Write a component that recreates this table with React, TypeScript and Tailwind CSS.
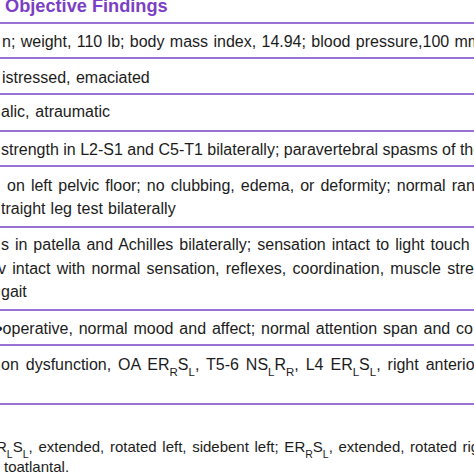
import React from "react";

const Line = () => <div className="h-[2px] w-full bg-[#9772d2] shrink-0" />;

const Sub = ({ children }: { children: React.ReactNode }) => (
  <sub className="text-[11.5px] align-[-3px] leading-none">{children}</sub>
);

const SubF = ({ children }: { children: React.ReactNode }) => (
  <sub className="text-[10.5px] align-[-3px] leading-none">{children}</sub>
);

export default function App() {
  return (
    <div
      className="w-[474px] h-[474px] overflow-hidden bg-white text-[#1c1c1c] flex flex-col"
      style={{ fontFamily: '"Liberation Sans", Arial, sans-serif' }}
    >
      <div className="h-[22px] shrink-0 overflow-hidden">
        <div className="-mt-[5px] pl-[5px] font-bold text-[18.2px] leading-[22px] text-[#7b3fc6] whitespace-nowrap">
          Objective Findings
        </div>
      </div>
      <Line />
      <div className="h-[33px] shrink-0 pt-[6px] pl-[2px] text-[16px] leading-[23px] whitespace-nowrap [word-spacing:0.9px]">
        n; weight, 110 lb; body mass index, 14.94; blood pressure,100 mm Hg
      </div>
      <Line />
      <div className="h-[34px] shrink-0 pt-[7px] pl-[2px] text-[16px] leading-[23px] whitespace-nowrap [word-spacing:1px]">
        istressed, emaciated
      </div>
      <Line />
      <div className="h-[35px] shrink-0 pt-[5px] pl-[1px] text-[16px] leading-[23px] whitespace-nowrap [word-spacing:1.4px]">
        alic, atraumatic
      </div>
      <Line />
      <div className="h-[33px] shrink-0 pt-[6px] pl-[1px] text-[16px] leading-[23px] whitespace-nowrap">
        strength in L2-S1 and C5-T1 bilaterally; paravertebral spasms of the
      </div>
      <Line />
      <div className="h-[59px] shrink-0 pt-[7px] pl-[1px] text-[16px] leading-[23px] whitespace-nowrap">
        <div className="[word-spacing:1.6px]">&nbsp;on left pelvic floor; no clubbing, edema, or deformity; normal range</div>
        <div className="[word-spacing:0.7px]">traight leg test bilaterally</div>
      </div>
      <Line />
      <div className="h-[81px] shrink-0 pt-[5px] pl-[1px] text-[16px] leading-[23.5px] whitespace-nowrap">
        <div className="[word-spacing:1.5px]">s in patella and Achilles bilaterally; sensation intact to light touch</div>
        <div className="-ml-[3px] [word-spacing:1.8px]">v intact with normal sensation, reflexes, coordination, muscle strength</div>
        <div>gait</div>
      </div>
      <Line />
      <div className="h-[33px] shrink-0 pt-[6px] text-[16px] leading-[23px] whitespace-nowrap [word-spacing:1.4px]">
        <span className="-ml-[3px]">•</span>operative, normal mood and affect; normal attention span and co
      </div>
      <Line />
      <div className="h-[57px] shrink-0 pt-[7px] pl-[1px] text-[16px] leading-[23px] whitespace-nowrap [word-spacing:2.5px]">
        on dysfunction, OA ER<Sub>R</Sub>S<Sub>L</Sub>, T5-6 NS<Sub>L</Sub>R<Sub>R</Sub>, L4 ER<Sub>L</Sub>S<Sub>L</Sub>, right anterior
      </div>
      <Line />
      <div className="pt-[32px] text-[15px] leading-[19px] whitespace-nowrap [word-spacing:1.5px]">
        <div className="-ml-[4px]">
          R<SubF>L</SubF>S<SubF>L</SubF>, extended, rotated left, sidebent left; ER<SubF>R</SubF>S<SubF>L</SubF>, extended, rotated right
        </div>
        <div className="pl-[4px]">toatlantal.</div>
      </div>
    </div>
  );
}
